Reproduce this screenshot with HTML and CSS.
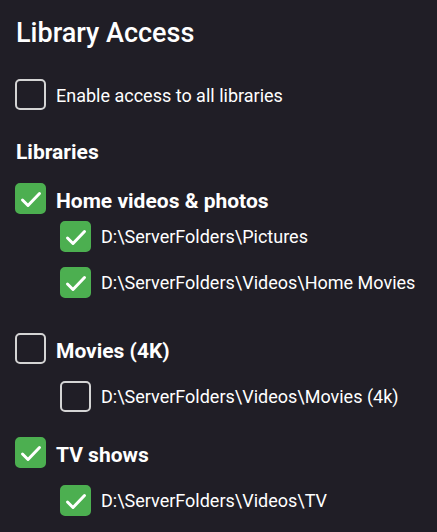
FILE: index.html
```html
<!DOCTYPE html>
<html>
<head>
<meta charset="utf-8">
<link rel="stylesheet" href="styles.css">
</head>
<body>
<div class="page">
  <h2 class="title">Library Access</h2>
  <label class="row row-all">
    <span class="box"></span>
    <span class="text">Enable access to all libraries</span>
  </label>
  <h3 class="heading">Libraries</h3>

  <div class="lib lib-first">
    <label class="row">
      <span class="box on"><svg viewBox="0 0 31 31"><polyline points="7.5,17 13,22.5 24.5,10.5"/></svg></span>
      <span class="libname">Home videos &amp; photos</span>
    </label>
    <div class="folders folders-tight">
      <label class="row folder">
        <span class="box on"><svg viewBox="0 0 31 31"><polyline points="7.5,17 13,22.5 24.5,10.5"/></svg></span>
        <span class="path">D:\ServerFolders\Pictures</span>
      </label>
      <label class="row folder">
        <span class="box on"><svg viewBox="0 0 31 31"><polyline points="7.5,17 13,22.5 24.5,10.5"/></svg></span>
        <span class="path">D:\ServerFolders\Videos\Home Movies</span>
      </label>
    </div>
  </div>

  <div class="lib lib-second">
    <label class="row">
      <span class="box"></span>
      <span class="libname">Movies (4K)</span>
    </label>
    <div class="folders">
      <label class="row folder">
        <span class="box"></span>
        <span class="path">D:\ServerFolders\Videos\Movies (4k)</span>
      </label>
    </div>
  </div>

  <div class="lib lib-third">
    <label class="row">
      <span class="box on"><svg viewBox="0 0 31 31"><polyline points="7.5,17 13,22.5 24.5,10.5"/></svg></span>
      <span class="libname">TV shows</span>
    </label>
    <div class="folders">
      <label class="row folder">
        <span class="box on"><svg viewBox="0 0 31 31"><polyline points="7.5,17 13,22.5 24.5,10.5"/></svg></span>
        <span class="path">D:\ServerFolders\Videos\TV</span>
      </label>
    </div>
  </div>
</div>
</body>
</html>
```
FILE: styles.css
```css
html, body {
  margin: 0;
  padding: 0;
  background: #201e26;
  height: 100%;
}
body {
  font-family: Roboto, "Noto Sans", sans-serif;
  color: #ffffff;
  overflow: hidden;
}
.page {
  padding: 17px 15px 0 15px;
  display: flex;
  flex-direction: column;
}
.title {
  margin: 0;
  font-size: 27px;
  line-height: 32px;
  font-weight: 500;
  padding-left: 1px;
}
.row {
  display: flex;
  align-items: center;
  height: 31px;
  gap: 10px;
}
.row-all {
  margin-top: 30px;
}
.box {
  box-sizing: border-box;
  width: 31px;
  height: 31px;
  flex: none;
  border: 2px solid #d4d4d4;
  border-radius: 5px;
  display: flex;
}
.box.on {
  background: #4caf50;
  border-color: #4caf50;
}
.box svg {
  width: 31px;
  height: 31px;
  margin: -2px;
}
.box svg polyline {
  fill: none;
  stroke: #ffffff;
  stroke-width: 3;
  stroke-linecap: round;
  stroke-linejoin: round;
}
.text {
  font-size: 18px;
  padding-top: 2px;
}
.heading {
  margin: 30px 0 0 0;
  font-size: 21px;
  line-height: 24px;
  font-weight: 700;
  padding-left: 1px;
}
.libname {
  font-size: 21px;
  font-weight: 700;
  padding-top: 5px;
}
.lib-first { margin-top: 19px; }
.lib-second { margin-top: 35px; }
.lib-third { margin-top: 25px; }
.folders {
  display: flex;
  flex-direction: column;
  padding-left: 45px;
  padding-top: 17px;
  gap: 15px;
}
.folders-tight {
  padding-top: 7px;
}
.path {
  font-size: 18px;
}
```
